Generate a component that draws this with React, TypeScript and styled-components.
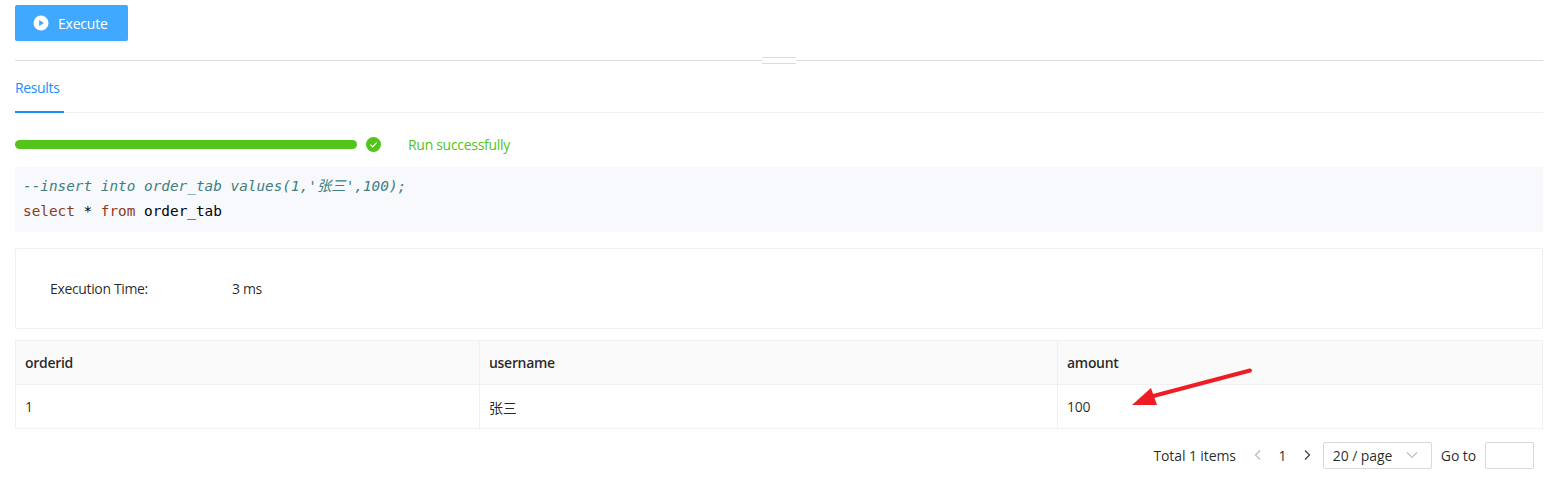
import React from "react";
import styled, { createGlobalStyle } from "styled-components";

const Global = createGlobalStyle`
  html, body { margin: 0; padding: 0; background: #fff; }
  body { font-family: "Open Sans", "Noto Sans CJK SC", sans-serif; font-size: 14px; color: rgba(0,0,0,.85); }
  * { box-sizing: border-box; }
`;

const Page = styled.div`
  position: relative;
  width: 1545px;
  height: 482px;
  padding: 5px 2px 0 15px;
  overflow: hidden;
`;
const Toolbar = styled.div`
  display: flex;
  height: 55px;
  align-items: flex-start;
`;
const RunButton = styled.button`
  width: 113px;
  height: 36px;
  display: flex;
  align-items: center;
  gap: 9px;
  padding: 0 0 0 18px;
  border: 0;
  border-radius: 2px;
  background: #40a9ff;
  color: #fff;
  font: 14px "Open Sans", sans-serif;
  letter-spacing: -0.2px;
  box-shadow: 0 2px 0 rgba(0,0,0,.03);
`;
const Splitter = styled.div`
  position: relative;
  height: 1px;
  background: #ddd;
`;
const Handle = styled.span`
  position: absolute;
  left: 747px;
  top: -3px;
  width: 34px;
  height: 7px;
  background: #fff;
  border-top: 1px solid #ddd;
  border-bottom: 1px solid #ddd;
`;
const Tabs = styled.div`
  height: 52px;
  border-bottom: 1px solid #f0f0f0;
  display: flex;
`;
const Tab = styled.div`
  width: 49px;
  height: 52px;
  padding-top: 17px;
  line-height: 20px;
  color: #1890ff;
  font-size: 14px;
  letter-spacing: -0.35px;
  border-bottom: 2px solid #1890ff;
`;
const ProgressRow = styled.div`
  height: 54px;
  display: flex;
  align-items: center;
  padding-top: 9px;
`;
const Track = styled.div`
  width: 342px;
  height: 9px;
  border-radius: 5px;
  background: #52c41a;
`;
const StatusIcon = styled.svg`
  width: 15px;
  height: 15px;
  margin-left: 9px;
`;
const StatusText = styled.span`
  margin-left: 27px;
  color: #52c41a;
  font-size: 14px;
  letter-spacing: -0.3px;
`;
const Code = styled.pre`
  margin: 0;
  height: 65px;
  padding: 7px 8px 0;
  background: #f8f9fd;
  font: 14.37px/25px "DejaVu Sans Mono", "Noto Sans CJK SC", monospace;
  color: #000;
`;
const Comment = styled.span`
  font-style: italic;
  color: #3f7f80;
`;
const Keyword = styled.span`
  color: #8f3a1c;
`;
const InfoCard = styled.div`
  margin-top: 16px;
  height: 81px;
  border: 1px solid #f0f0f0;
  border-radius: 2px;
  display: flex;
  align-items: center;
  padding-left: 34px;
  font-size: 14px;
  letter-spacing: -0.35px;
`;
const InfoLabel = styled.span`
  width: 182px;
`;
const ResultTable = styled.table`
  margin-top: 11px;
  width: 1528px;
  border-collapse: collapse;
  table-layout: fixed;
  font-size: 14px;
  border: 1px solid #f0f0f0;
`;
const HeadCell = styled.th`
  height: 44px;
  padding: 0 9px;
  text-align: left;
  font-weight: 600;
  letter-spacing: -0.3px;
  background: #fafafa;
  border: 1px solid #f0f0f0;
`;
const BodyCell = styled.td`
  height: 44px;
  padding: 0 9px;
  border: 1px solid #f0f0f0;
  letter-spacing: -0.3px;
`;
const Pager = styled.div`
  margin-top: 12px;
  height: 28px;
  display: flex;
  justify-content: flex-end;
  align-items: center;
  padding-right: 9px;
  font-size: 14px;
  letter-spacing: -0.1px;
`;
const Total = styled.span`
  margin-right: 16px;
`;
const Chevron = styled.svg<{ $off?: boolean }>`
  width: 12px;
  height: 12px;
  fill: none;
  stroke: ${p => (p.$off ? "#bfbfbf" : "#444")};
  stroke-width: 1.3;
`;
const PageNumber = styled.span`
  width: 37px;
  text-align: center;
`;
const PageSelect = styled.div`
  margin-left: 10px;
  width: 109px;
  height: 27px;
  border: 1px solid #d9d9d9;
  border-radius: 2px;
  display: flex;
  align-items: center;
  justify-content: space-between;
  padding: 0 13px 0 9px;
`;
const SelectArrow = styled.svg`
  width: 12px;
  height: 12px;
  fill: none;
  stroke: #bfbfbf;
  stroke-width: 1.1;
`;
const GoTo = styled.span`
  margin: 0 9px 0 9px;
`;
const PageInput = styled.div`
  width: 49px;
  height: 27px;
  border: 1px solid #d9d9d9;
  border-radius: 2px;
`;
const Annotation = styled.svg`
  position: absolute;
  left: 1120px;
  top: 360px;
  width: 140px;
  height: 55px;
`;

export default function App() {
  return (
    <Page>
      <Global />
      <Toolbar>
        <RunButton>
          <svg width="16" height="16" viewBox="0 0 16 16">
            <circle cx="8" cy="8" r="7.5" fill="#fff" />
            <path d="M6.2 4.9v6.2L11 8z" fill="#40a9ff" />
          </svg>
          Execute
        </RunButton>
      </Toolbar>
      <Splitter><Handle /></Splitter>
      <Tabs><Tab>Results</Tab></Tabs>
      <ProgressRow>
        <Track />
        <StatusIcon viewBox="0 0 15 15">
          <circle cx="7.5" cy="7.5" r="7.5" fill="#52c41a" />
          <path d="M4.4 7.6l2.2 2.2 4-4.2" fill="none" stroke="#fff" strokeWidth="1.2" />
        </StatusIcon>
        <StatusText>Run successfully</StatusText>
      </ProgressRow>
      <Code>
        <Comment>--insert into order_tab values(1,'张三',100);</Comment>{"\n"}
        <Keyword>select</Keyword> * <Keyword>from</Keyword> order_tab
      </Code>
      <InfoCard>
        <InfoLabel>Execution Time:</InfoLabel>
        <span>3 ms</span>
      </InfoCard>
      <ResultTable>
        <colgroup>
          <col style={{ width: 464 }} />
          <col style={{ width: 578 }} />
          <col />
        </colgroup>
        <thead>
          <tr>
            <HeadCell>orderid</HeadCell>
            <HeadCell>username</HeadCell>
            <HeadCell>amount</HeadCell>
          </tr>
        </thead>
        <tbody>
          <tr>
            <BodyCell>1</BodyCell>
            <BodyCell>张三</BodyCell>
            <BodyCell>100</BodyCell>
          </tr>
        </tbody>
      </ResultTable>
      <Pager>
        <Total>Total 1 items</Total>
        <Chevron $off viewBox="0 0 12 12"><path d="M8 1.5L3.5 6 8 10.5" /></Chevron>
        <PageNumber>1</PageNumber>
        <Chevron viewBox="0 0 12 12"><path d="M4 1.5L8.500 6 4 10.5" /></Chevron>
        <PageSelect>
          <span>20 / page</span>
          <SelectArrow viewBox="0 0 12 12"><path d="M1 3.5l5 5 5-5" /></SelectArrow>
        </PageSelect>
        <GoTo>Go to</GoTo>
        <PageInput />
      </Pager>
      <Annotation viewBox="0 0 140 55">
        <path d="M130 10.500L22 39" stroke="#ee1c25" strokeWidth="4" strokeLinecap="round" fill="none" />
        <path d="M12 45L31 28l6 17z" fill="#ee1c25" />
      </Annotation>
    </Page>
  );
}
